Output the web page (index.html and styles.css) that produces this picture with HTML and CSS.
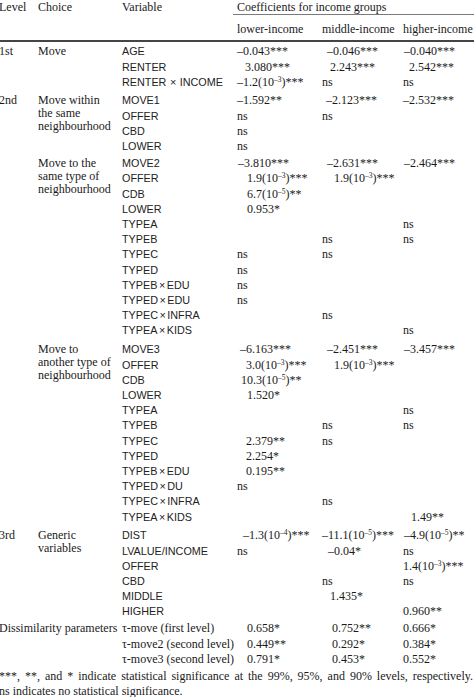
FILE: index.html
```html
<!DOCTYPE html>
<html>
<head>
<meta charset="utf-8">
<title>Coefficients for income groups</title>
<link rel="stylesheet" href="styles.css">
</head>
<body>
<div class="page">
<table class="tbl">
<colgroup><col class="c-level"><col class="c-choice"><col class="c-var"><col class="c-lo"><col class="c-mid"><col class="c-hi"></colgroup>
<thead>
<tr class="h1"><th rowspan="2" class="hl">Level</th><th rowspan="2" class="hl">Choice</th><th rowspan="2" class="hl">Variable</th><th colspan="3" class="hcoef">Coefficients for income groups</th></tr>
<tr class="h2"><th class="i4">lower-income</th><th>middle-income</th><th>higher-income</th></tr>
</thead>
<tbody class="g1">
<tr class="first"><td rowspan="3" class="lvl">1st</td><td rowspan="3" class="ch"><div class="ch-text">Move</div></td><td class="var">AGE</td><td class="i4">–0.043***</td><td class="i5">–0.046***</td><td class="i1">–0.040***</td></tr>
<tr><td class="var">RENTER</td><td class="i12">3.080***</td><td class="i8">2.243***</td><td class="i6">2.542***</td></tr>
<tr><td class="var">RENTER<span class="x wide">×</span>INCOME</td><td class="i4">–1.2(10<sup class="e">–3</sup>)***</td><td>ns</td><td>ns</td></tr>
</tbody>
<tbody class="g2">
<tr class="first"><td rowspan="4" class="lvl">2nd</td><td rowspan="4" class="ch"><div class="ch-text">Move within<br>the same<br>neighbourhood</div></td><td class="var">MOVE1</td><td class="i4">–1.592**</td><td class="i4">–2.123***</td><td>–2.532***</td></tr>
<tr><td class="var">OFFER</td><td class="i4">ns</td><td>ns</td><td></td></tr>
<tr><td class="var">CBD</td><td class="i4">ns</td><td></td><td></td></tr>
<tr><td class="var">LOWER</td><td class="i4">ns</td><td></td><td></td></tr>
</tbody>
<tbody class="g3">
<tr class="first"><td rowspan="12" class="lvl"></td><td rowspan="12" class="ch"><div class="ch-text">Move to the<br>same type of<br>neighbourhood</div></td><td class="var">MOVE2</td><td class="i5">–3.810***</td><td class="i5">–2.631***</td><td class="i1">–2.464***</td></tr>
<tr><td class="var">OFFER</td><td class="i14">1.9(10<sup class="e">–3</sup>)***</td><td class="i12">1.9(10<sup class="e">–3</sup>)***</td><td></td></tr>
<tr><td class="var">CDB</td><td class="i14">6.7(10<sup class="e">–5</sup>)**</td><td></td><td></td></tr>
<tr><td class="var">LOWER</td><td class="i14">0.953*</td><td></td><td></td></tr>
<tr><td class="var">TYPEA</td><td></td><td></td><td>ns</td></tr>
<tr><td class="var">TYPEB</td><td></td><td>ns</td><td>ns</td></tr>
<tr><td class="var">TYPEC</td><td class="i4">ns</td><td>ns</td><td></td></tr>
<tr><td class="var">TYPED</td><td class="i4">ns</td><td></td><td></td></tr>
<tr><td class="var">TYPEB<span class="x">×</span>EDU</td><td class="i4">ns</td><td></td><td></td></tr>
<tr><td class="var">TYPED<span class="x">×</span>EDU</td><td class="i4">ns</td><td></td><td></td></tr>
<tr><td class="var">TYPEC<span class="x">×</span>INFRA</td><td></td><td>ns</td><td></td></tr>
<tr><td class="var">TYPEA<span class="x">×</span>KIDS</td><td></td><td></td><td>ns</td></tr>
</tbody>
<tbody class="g4">
<tr class="first"><td rowspan="12" class="lvl"></td><td rowspan="12" class="ch"><div class="ch-text">Move to<br>another type of<br>neighbourhood</div></td><td class="var">MOVE3</td><td class="i7">–6.163***</td><td class="i5">–2.451***</td><td class="i1">–3.457***</td></tr>
<tr><td class="var">OFFER</td><td class="i13">3.0(10<sup class="e">–3</sup>)***</td><td class="i12">1.9(10<sup class="e">–3</sup>)***</td><td></td></tr>
<tr><td class="var">CDB</td><td class="i8">10.3(10<sup class="e">–5</sup>)**</td><td></td><td></td></tr>
<tr><td class="var">LOWER</td><td class="i14">1.520*</td><td></td><td></td></tr>
<tr><td class="var">TYPEA</td><td></td><td></td><td>ns</td></tr>
<tr><td class="var">TYPEB</td><td></td><td>ns</td><td>ns</td></tr>
<tr><td class="var">TYPEC</td><td class="i13">2.379**</td><td>ns</td><td></td></tr>
<tr><td class="var">TYPED</td><td class="i13">2.254*</td><td></td><td></td></tr>
<tr><td class="var">TYPEB<span class="x">×</span>EDU</td><td class="i13">0.195**</td><td></td><td></td></tr>
<tr><td class="var">TYPED<span class="x">×</span>DU</td><td class="i4">ns</td><td></td><td></td></tr>
<tr><td class="var">TYPEC<span class="x">×</span>INFRA</td><td></td><td>ns</td><td></td></tr>
<tr><td class="var">TYPEA<span class="x">×</span>KIDS</td><td></td><td></td><td class="i8">1.49**</td></tr>
</tbody>
<tbody class="g5">
<tr class="first"><td rowspan="6" class="lvl">3rd</td><td rowspan="6" class="ch"><div class="ch-text">Generic<br>variables</div></td><td class="var">DIST</td><td class="i10">–1.3(10<sup class="e">–4</sup>)***</td><td>–11.1(10<sup class="e">–5</sup>)***</td><td class="i1">–4.9(10<sup class="e">–5</sup>)**</td></tr>
<tr><td class="var">LVALUE/INCOME</td><td class="i4">ns</td><td class="i6">–0.04*</td><td>ns</td></tr>
<tr><td class="var">OFFER</td><td></td><td></td><td>1.4(10<sup class="e">–3</sup>)***</td></tr>
<tr><td class="var">CBD</td><td></td><td>ns</td><td>ns</td></tr>
<tr><td class="var">MIDDLE</td><td></td><td class="i8">1.435*</td><td></td></tr>
<tr><td class="var">HIGHER</td><td></td><td></td><td>0.960**</td></tr>
</tbody>
<tbody class="g6">
<tr class="first"><td rowspan="3" colspan="2" class="lvl">Dissimilarity parameters</td><td>τ-move (first level)</td><td class="i14">0.658*</td><td class="i10">0.752**</td><td>0.666*</td></tr>
<tr><td>τ-move2 (second level)</td><td class="i14">0.449**</td><td class="i10">0.292*</td><td>0.384*</td></tr>
<tr><td>τ-move3 (second level)</td><td class="i14">0.791*</td><td class="i10">0.453*</td><td>0.552*</td></tr>
</tbody>
</table>
<div class="note">
<div class="note-l1">***, **, and * indicate statistical significance at the 99%, 95%, and 90% levels, respectively.</div>
<div>ns indicates no statistical significance.</div>
</div>
</div>
</body>
</html>
```

FILE: styles.css
```css
html, body {
  margin: 0;
  padding: 0;
  background: #ffffff;
}

body {
  font-family: "Liberation Serif", "Times New Roman", serif;
  font-size: 12px;
  color: #1a1a1a;
}

.page {
  width: 476px;
  margin-left: -1px;
}

.tbl {
  border-collapse: separate;
  border-spacing: 0;
  table-layout: fixed;
  width: 476px;
}

.c-level { width: 39px; }
.c-choice { width: 84px; }
.c-var { width: 111px; }
.c-lo { width: 89px; }
.c-mid { width: 81px; }
.c-hi { width: 72px; }

th, td {
  padding: 0;
  text-align: left;
  font-weight: normal;
  white-space: nowrap;
  vertical-align: top;
}

.h1 th {
  line-height: 14px;
}

.hl {
  border-bottom: 2px solid #454545;
}

.hcoef {
  border-bottom: 1px solid #7a7a7a;
  padding-left: 4px;
}

.h2 th {
  padding-top: 7px;
  padding-bottom: 3px;
  line-height: 15px;
  border-bottom: 2px solid #454545;
}

td {
  line-height: 15.2px;
  height: 15.2px;
}

.var {
  font-family: "Liberation Sans", Arial, sans-serif;
  font-size: 10.8px;
  color: #222;
}

.x {
  margin: 0 1.5px;
}

.x.wide {
  margin: 0 3.5px;
}

.ch {
  line-height: 13px;
}

.ch-text {
  padding-top: 1px;
  line-height: 13px;
}

.e {
  font-size: 7.5px;
  line-height: 0;
  vertical-align: 4px;
}

.g1 .first td { padding-top: 2.4px; }
.g2 .first td { padding-top: 3.4px; }
.g3 .first td { padding-top: 2px; }
.g4 .first td { padding-top: 3.8px; }
.g5 .first td { padding-top: 3.6px; }
.g6 .first td { padding-top: 1.8px; }

.i1 { padding-left: 1px; }
.i4 { padding-left: 4px; }
.i5 { padding-left: 5px; }
.i6 { padding-left: 6px; }
.i7 { padding-left: 7px; }
.i8 { padding-left: 8px; }
.i10 { padding-left: 10px; }
.i12 { padding-left: 12px; }
.i13 { padding-left: 13px; }
.i14 { padding-left: 14px; }

.note {
  width: 474px;
  line-height: 15px;
  padding-top: 2px;
}

.note-l1 {
  text-align: justify;
  text-align-last: justify;
}
```
